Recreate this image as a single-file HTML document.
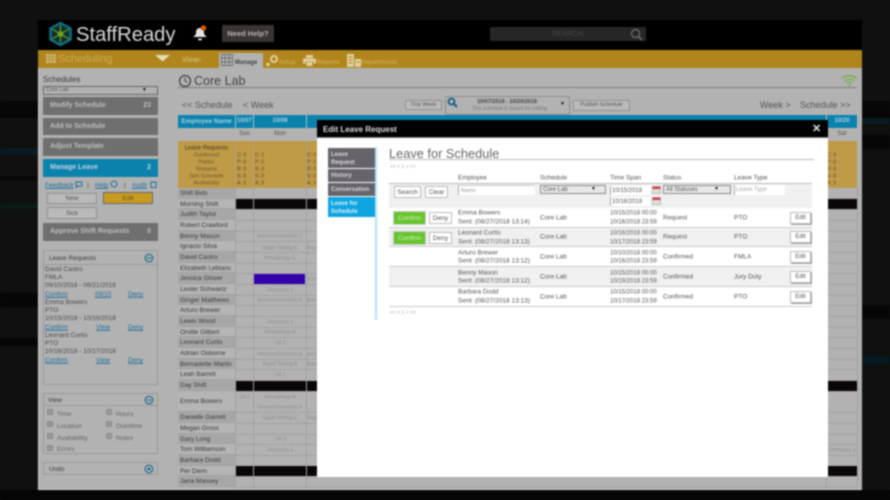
<!DOCTYPE html>
<html><head><meta charset="utf-8"><title>StaffReady</title>
<style>
html,body{margin:0;padding:0;background:#101010;}
#wrap{position:relative;width:890px;height:500px;overflow:hidden;background:#101010;}
#p{position:absolute;left:0;top:0;width:890px;height:500px;overflow:hidden;filter:blur(.7px);font-family:"Liberation Sans",sans-serif;color:#333;}
#p div,#p span,#p svg{position:absolute;white-space:nowrap;}
.b{background:#6f6f6f;color:#bdbdbd;font-weight:bold;font-size:7px;left:43px;width:115px;height:18px;line-height:18px;text-indent:7px;}
.b i{position:absolute;right:7px;top:0;font-style:normal;text-indent:0;}
.wb{background:#bababa;border:1px solid #909090;font-size:6.5px;text-align:center;color:#555;box-sizing:border-box;}
.t{font-size:6.5px;color:#4a4a4a;left:45px;transform:translateY(.8px);}
.l{font-size:6.5px;color:#1f6f9f;text-decoration:underline;transform:translateY(.8px);}
.n{left:178px;width:57px;height:10.67px;line-height:12.5px;font-size:6.5px;color:#3a3a3a;text-indent:2px;background:#b5b5b5;border-bottom:1px solid #a2a2a2;box-sizing:border-box;}
.n.a{background:#a7a7a7;}
.c{left:254px;width:52px;text-align:center;font-size:5px;color:#909090;overflow:hidden;transform:translateY(1.5px);}
.rl{left:178px;width:57px;text-align:center;font-size:5.5px;color:#6b5a26;transform:translateY(1.5px);}
.yt{font-size:5px;color:#5a4c25;transform:translateY(1.5px);}
.bl{height:10px;background:#0a0506;}
.v{width:1px;background:#a0a0a0;top:188px;height:299px;}
.h{height:1px;background:#a2a2a2;}
.m{font-size:6.5px;color:#555;transform:translateY(.7px);}
.ed{left:790px;width:21px;height:12px;background:#fff;border:1px solid #bbb;box-shadow:1px 1px 0 #999;box-sizing:border-box;font-size:6px;line-height:11px;text-align:center;color:#555;}
.gr{left:394px;width:31px;height:12px;background:#66c42c;color:#d7f0c0;font-size:6.5px;line-height:13px;text-align:center;box-shadow:0 0 0 1px #ccc;}
.dn{left:429px;width:23px;height:12px;background:#fff;border:1px solid #bbb;box-sizing:border-box;color:#555;font-size:6.5px;line-height:11px;text-align:center;}
.nv{left:328px;width:47px;background:#66636a;color:#d8d8d8;font-weight:bold;font-size:6px;line-height:8px;padding:0 0 0 3px;box-sizing:border-box;}
.ck{width:6px;height:6px;background:#9a9a9a;border:1px solid #8a8a8a;box-sizing:border-box;border-radius:1px;}
.ct{font-size:6.5px;color:#666;transform:translateY(.8px);}
.tb{font-size:6px;color:#c9a84f;font-weight:bold;}
</style></head>
<body><div id="wrap"><div id="p">

<!-- dim background bands -->
<div style="left:0;top:101px;width:38px;height:17px;background:#070707"></div>
<div style="left:0;top:148px;width:38px;height:7px;background:#0a1a20"></div>
<div style="left:0;top:176px;width:38px;height:5px;background:#080808"></div>
<div style="left:0;top:203px;width:38px;height:6px;background:#0a1a16"></div>
<div style="left:0;top:293px;width:38px;height:14px;background:#060606"></div>
<div style="left:0;top:338px;width:38px;height:8px;background:#060606"></div>
<div style="left:862px;top:101px;width:28px;height:17px;background:#070707"></div>
<div style="left:862px;top:118px;width:28px;height:6px;background:#0a1a20"></div>
<div style="left:862px;top:135px;width:28px;height:14px;background:#060606"></div>
<div style="left:862px;top:305px;width:28px;height:14px;background:#060606"></div>
<div style="left:862px;top:355px;width:28px;height:10px;background:#08181e"></div>
<div style="left:0;top:490px;width:890px;height:10px;background:#050505"></div>

<!-- header -->
<div style="left:38px;top:20px;width:824px;height:30px;background:#000"></div>
<svg style="left:48px;top:21px" width="25" height="26" viewBox="0 0 25 26"><polygon points="12.5,2 22.5,7.5 22.5,18.5 12.5,24 2.5,18.5 2.5,7.5" fill="#0a3030" stroke="#0f6f86" stroke-width="2.4"/><g stroke="#5f8a1c" stroke-width="1.5"><line x1="12.5" y1="4" x2="12.5" y2="22"/><line x1="4" y1="8" x2="21" y2="18"/><line x1="21" y1="8" x2="4" y2="18"/></g><circle cx="12.5" cy="13" r="3" fill="#6f9e1c"/></svg>
<div style="left:76px;top:21px;font-size:20.2px;line-height:28px;color:#d8d8d8">StaffReady</div>
<svg style="left:192px;top:25px" width="16" height="16" viewBox="0 0 16 16"><path d="M8 3c-3 0-4 2-4 4.500 0 2-1 3-3 4.500h14c-2-1.500-3-2.500-3-4.500C12 5 11 3 8 3z" fill="#e2e2e2"/><path d="M6 13.500a2 2 0 0 0 4 0z" fill="#e2e2e2"/><circle cx="11.500" cy="3" r="2.800" fill="#d2560f"/></svg>
<div style="left:222px;top:25px;width:52px;height:17px;background:#3a3434;border-radius:1px;color:#b8b8b8;font-size:7.5px;font-weight:bold;line-height:17px;text-align:center">Need Help?</div>
<div style="left:490px;top:27px;width:156px;height:14px;background:#262626;border-radius:1px;"></div>
<div style="left:552px;top:29px;font-size:7.5px;line-height:10px;color:#484848">SEARCH</div>
<svg style="left:630px;top:28px" width="13" height="13" viewBox="0 0 13 13"><circle cx="5.500" cy="5.500" r="4" fill="none" stroke="#6a6a6a" stroke-width="1.400"/><line x1="8.500" y1="8.500" x2="12" y2="12" stroke="#6a6a6a" stroke-width="1.800"/></svg>

<!-- yellow bar -->
<div style="left:38px;top:50px;width:824px;height:18px;background:#b0851c"></div>
<svg style="left:46px;top:54px" width="10" height="9" viewBox="0 0 10 9"><path d="M0 0h10v9H0z" fill="#d0b679"/><path d="M3.300 0v9M6.600 0v9M0 3h10M0 6h10" stroke="#b0851c" stroke-width=".7"/></svg>
<div style="left:58px;top:52px;font-size:11px;line-height:14px;color:#c9aa5c">Scheduling</div>
<svg style="left:155px;top:55px" width="16" height="7"><polygon points="0,0 15,0 7.500,6.500" fill="#e6d9b5"/></svg>
<div style="left:182px;top:55px;font-size:7.5px;line-height:10px;font-weight:bold;color:#d0b679">View:</div>
<div style="left:219px;top:53px;width:44px;height:15px;background:#b2b2b2"></div>
<svg style="left:221px;top:54px" width="12" height="12" viewBox="0 0 12 12"><path d="M.5.500h11v11H.500zM4 .5v11M8 .5v11M.5 4h11M.5 8h11" fill="none" stroke="#5c5c5c" stroke-width=".7"/></svg>
<div style="left:235px;top:59px;font-size:6px;line-height:8px;font-weight:bold;color:#444">Manage</div>
<svg style="left:265px;top:54px" width="14" height="13" viewBox="0 0 14 13"><circle cx="9" cy="5" r="3" fill="none" stroke="#e0cf9e" stroke-width="2"/><circle cx="3" cy="10.500" r="1.800" fill="#e0cf9e"/></svg>
<div class="tb" style="left:279px;top:59px;line-height:8px">Setup</div>
<svg style="left:303px;top:55px" width="13" height="11" viewBox="0 0 13 11"><path d="M3 0h7v3H3zM0 3.500h13v5h-2.500V6.500h-8v2H0zM3.500 7h6v4h-6z" fill="#e0cf9e"/></svg>
<div class="tb" style="left:317px;top:59px;line-height:8px">Reports</div>
<svg style="left:347px;top:54px" width="14" height="13" viewBox="0 0 14 13"><path d="M0 0h7v13H0zM8 5h6v8H8z" fill="#e0cf9e"/><path d="M1.500 3h4M1.500 6h4M1.500 9h4M9.500 8h3" stroke="#b0851c"/></svg>
<div class="tb" style="left:361px;top:59px;line-height:8px">Departments</div>

<!-- main panel -->
<div style="left:38px;top:68px;width:824px;height:422px;background:#b2b2b2;border-left:1px solid #cfcfcf;border-bottom:1px solid #cfcfcf;box-sizing:border-box"></div>

<!-- sidebar -->
<div style="left:43px;top:75px;font-size:8px;line-height:10px;color:#3c3c3c">Schedules</div>
<div style="left:43px;top:86px;width:115px;height:9px;border:1px solid #666;box-sizing:border-box;font-size:5.5px;line-height:7px;text-indent:2px;color:#555">Core Lab<span style="right:10px;top:0;font-size:5px;text-indent:0;color:#111">▼</span></div>
<div class="b" style="top:97px">Modify Schedule<i>23</i></div>
<div class="b" style="top:118px;height:17px;line-height:17px">Add to Schedule</div>
<div class="b" style="top:138px;height:18px">Adjust Template</div>
<div class="b" style="top:159px;background:#0b82ad;color:#c0d3dd">Manage Leave<i>2</i></div>
<div class="l" style="left:45px;top:181px;line-height:8px">Feedback</div>
<svg style="left:75px;top:181px" width="8" height="7"><path d="M1 1h6v4H3L1.500 6.500V5H1z" fill="none" stroke="#1f6f9f"/></svg>
<div class="t" style="left:87px;top:181px;line-height:8px">|</div>
<div class="l" style="left:95px;top:181px;line-height:8px">Help</div>
<svg style="left:110px;top:180px" width="8" height="8"><circle cx="4" cy="4" r="3" fill="none" stroke="#1f6f9f"/></svg>
<div class="t" style="left:124px;top:181px;line-height:8px">|</div>
<div class="l" style="left:132px;top:181px;line-height:8px">Audit</div>
<svg style="left:150px;top:181px" width="7" height="7"><rect x="1" y="1" width="5" height="5.500" fill="none" stroke="#1f6f9f"/></svg>
<div class="wb" style="left:47px;top:193px;width:50px;height:11px;line-height:10px">New</div>
<div class="wb" style="left:103px;top:192px;width:50px;height:12px;line-height:11px;background:#c79a20;border-color:#666;color:#6b5310">Edit</div>
<div class="wb" style="left:47px;top:207px;width:50px;height:12px;line-height:11px">Sick</div>
<div class="b" style="top:223px;height:18px">Approve Shift Requests<i>0</i></div>

<div style="left:43px;top:250px;width:115px;height:135px;border:1px solid #999;box-sizing:border-box"></div>
<div style="left:44px;top:264px;width:113px;height:1px;background:#999"></div>
<div class="t" style="left:49px;top:253px;line-height:9px;color:#3a3a3a">Leave Requests</div>
<svg style="left:144px;top:253px" width="10" height="10"><circle cx="5" cy="5" r="3.800" fill="none" stroke="#1d6f8a" stroke-width="1.200"/><line x1="2.800" y1="5" x2="7.200" y2="5" stroke="#1d6f8a" stroke-width="1.200"/></svg>
<div class="t" style="top:265px;line-height:8px">David Castro</div>
<div class="t" style="top:273px;line-height:8px">FMLA</div>
<div class="t" style="top:281px;line-height:8px">09/10/2018 - 09/21/2018</div>
<div class="l" style="left:45px;top:290px;line-height:8px">Confirm</div><div class="l" style="left:95px;top:290px;line-height:8px">09/10</div><div class="l" style="left:128px;top:290px;line-height:8px">Deny</div>
<div class="t" style="top:298px;line-height:8px">Emma Bowers</div>
<div class="t" style="top:306px;line-height:8px">PTO</div>
<div class="t" style="top:314px;line-height:8px">10/15/2018 - 10/16/2018</div>
<div class="l" style="left:45px;top:323px;line-height:8px">Confirm</div><div class="l" style="left:96px;top:323px;line-height:8px">View</div><div class="l" style="left:128px;top:323px;line-height:8px">Deny</div>
<div class="t" style="top:331px;line-height:8px">Leonard Curtis</div>
<div class="t" style="top:339px;line-height:8px">PTO</div>
<div class="t" style="top:347px;line-height:8px">10/16/2018 - 10/17/2018</div>
<div class="l" style="left:45px;top:356px;line-height:8px">Confirm</div><div class="l" style="left:96px;top:356px;line-height:8px">View</div><div class="l" style="left:128px;top:356px;line-height:8px">Deny</div>

<div style="left:43px;top:393px;width:115px;height:61px;border:1px solid #999;box-sizing:border-box"></div>
<div style="left:44px;top:405px;width:113px;height:1px;background:#999"></div>
<div class="t" style="left:48px;top:395px;line-height:9px;color:#3a3a3a">View</div>
<svg style="left:144px;top:395px" width="10" height="10"><circle cx="5" cy="5" r="3.800" fill="none" stroke="#1d6f8a" stroke-width="1.200"/><line x1="2.800" y1="5" x2="7.200" y2="5" stroke="#1d6f8a" stroke-width="1.200"/></svg>
<div class="ck" style="left:47px;top:409px"></div><div class="ct" style="left:57px;top:409px;line-height:9px">Time</div>
<div class="ck" style="left:106px;top:409px"></div><div class="ct" style="left:116px;top:409px;line-height:9px">Hours</div>
<div class="ck" style="left:47px;top:421px"></div><div class="ct" style="left:57px;top:421px;line-height:9px">Location</div>
<div class="ck" style="left:106px;top:421px"></div><div class="ct" style="left:116px;top:421px;line-height:9px">Overtime</div>
<div class="ck" style="left:47px;top:433px"></div><div class="ct" style="left:57px;top:433px;line-height:9px">Availability</div>
<div class="ck" style="left:106px;top:433px"></div><div class="ct" style="left:116px;top:433px;line-height:9px">Notes</div>
<div class="ck" style="left:47px;top:445px"></div><div class="ct" style="left:57px;top:444px;line-height:9px">Errors</div>

<div style="left:43px;top:462px;width:115px;height:13px;border:1px solid #999;box-sizing:border-box"></div>
<div class="t" style="left:49px;top:464px;line-height:9px;color:#3a3a3a">Undo</div>
<svg style="left:144px;top:464px" width="10" height="10"><circle cx="5" cy="5" r="3.800" fill="none" stroke="#1d6f8a" stroke-width="1.200"/><circle cx="5" cy="5" r="1.500" fill="#1d6f8a"/></svg>

<!-- title -->
<svg style="left:178px;top:74px" width="14" height="14" viewBox="0 0 14 14"><circle cx="7" cy="7" r="5.500" fill="none" stroke="#444" stroke-width="1.300"/><path d="M7 3.500V7l2.500 1.500" fill="none" stroke="#444"/></svg>
<div style="left:194px;top:73px;font-size:12.5px;line-height:16px;color:#444">Core Lab</div>
<div style="left:178px;top:87px;width:679px;height:1px;background:#7d7d7d"></div>
<svg style="left:841px;top:74px" width="17" height="13" viewBox="0 0 17 13"><g fill="none" stroke="#6fae3a" stroke-width="1.200"><path d="M1 4.500C5 1 12 1 16 4.500"/><path d="M3.500 7C6 4.800 11 4.800 13.500 7"/><path d="M6 9.300C7.500 8.200 9.500 8.200 11 9.300"/></g><circle cx="8.500" cy="11.500" r="1" fill="#6fae3a"/></svg>

<!-- nav -->
<div style="left:182px;top:99px;font-size:9px;line-height:12px;color:#555">&lt;&lt; Schedule</div>
<div style="left:243px;top:99px;font-size:9px;line-height:12px;color:#555">&lt; Week</div>
<div class="wb" style="left:405px;top:100px;width:37px;height:10px;font-size:5.5px;line-height:8px">This Week</div>
<div style="left:445px;top:96px;width:125px;height:19px;border:1px solid #8e8e8e;border-radius:2px;box-sizing:border-box"></div>
<svg style="left:447px;top:97px" width="11" height="11"><circle cx="4.500" cy="4.500" r="3" fill="none" stroke="#0f5f86" stroke-width="1.800"/><line x1="6.500" y1="6.500" x2="10" y2="10" stroke="#0f5f86" stroke-width="2"/></svg>
<div style="left:477px;top:98px;font-size:5.5px;line-height:8px;font-weight:bold;color:#444">10/07/2018 - 10/20/2018</div>
<div style="left:472px;top:105px;font-size:5px;line-height:8px;color:#777">This schedule is locked for editing</div>
<div style="left:560px;top:100px;font-size:5px;line-height:8px;color:#111">▼</div>
<div class="wb" style="left:573px;top:100px;width:57px;height:11px;font-size:5.500px;line-height:9px">Publish Schedule</div>
<div style="left:760px;top:99px;font-size:9px;line-height:12px;color:#555">Week &gt;</div>
<div style="left:800px;top:99px;font-size:9px;line-height:12px;color:#555">Schedule &gt;&gt;</div>

<!-- grid header -->
<div style="left:178px;top:115px;width:679px;height:13px;background:#0b82ad"></div>
<div style="left:235px;top:115px;width:1px;height:13px;background:#9cc4d4"></div>
<div style="left:253px;top:115px;width:1px;height:13px;background:#9cc4d4"></div>
<div style="left:306px;top:115px;width:1px;height:13px;background:#9cc4d4"></div>
<div style="left:826px;top:115px;width:1px;height:13px;background:#9cc4d4"></div>
<div style="left:178px;top:115px;width:57px;text-align:center;line-height:13px;font-size:6.500px;font-weight:bold;color:#a9d0e0">Employee Name</div>
<div style="left:235px;top:115px;width:19px;text-align:center;line-height:13px;font-size:6px;font-weight:bold;color:#a9d0e0">10/07</div>
<div style="left:254px;top:115px;width:52px;text-align:center;line-height:13px;font-size:6px;font-weight:bold;color:#a9d0e0">10/08</div>
<div style="left:827px;top:115px;width:30px;text-align:center;line-height:13px;font-size:6px;font-weight:bold;color:#a9d0e0">10/20</div>
<div style="left:235px;top:129px;width:19px;text-align:center;line-height:10px;font-size:6px;color:#555">Sun</div>
<div style="left:254px;top:129px;width:52px;text-align:center;line-height:10px;font-size:6px;color:#555">Mon</div>
<div style="left:827px;top:129px;width:30px;text-align:center;line-height:10px;font-size:6px;color:#555">Sat</div>

<!-- yellow leave section -->
<div style="left:178px;top:141px;width:679px;height:47px;background:#bf9a47"></div>
<div style="left:235px;top:141px;width:1px;height:47px;background:#b0a080"></div>
<div style="left:253px;top:141px;width:1px;height:47px;background:#b0a080"></div>
<div style="left:306px;top:141px;width:1px;height:47px;background:#b0a080"></div>
<div class="rl" style="top:143px;line-height:8px;font-size:6px;color:#443a1a">Leave Requests</div>
<div class="rl" style="top:151px;line-height:7px">Confirmed</div>
<div class="rl" style="top:158px;line-height:7px">Partial</div>
<div class="rl" style="top:165px;line-height:7px">Request</div>
<div class="rl" style="top:172px;line-height:7px">See Schedule</div>
<div class="rl" style="top:179px;line-height:7px">Availability</div>
<div class="yt" style="left:237px;top:151px;line-height:7px">C: 0</div><div class="yt" style="left:237px;top:158px;line-height:7px">P: 0</div><div class="yt" style="left:237px;top:165px;line-height:7px">R: 0</div><div class="yt" style="left:237px;top:172px;line-height:7px">S: 0</div><div class="yt" style="left:237px;top:179px;line-height:7px">A: 3</div>
<div class="yt" style="left:255px;top:151px;line-height:7px">C: 1</div><div class="yt" style="left:255px;top:158px;line-height:7px">P: 0</div><div class="yt" style="left:255px;top:165px;line-height:7px">R: 0</div><div class="yt" style="left:255px;top:172px;line-height:7px">S: 0</div><div class="yt" style="left:255px;top:179px;line-height:7px">A: 3</div>
<div class="yt" style="left:307px;top:151px;line-height:7px">C: 0</div><div class="yt" style="left:307px;top:158px;line-height:7px">P: 0</div><div class="yt" style="left:307px;top:165px;line-height:7px">R: 0</div><div class="yt" style="left:307px;top:172px;line-height:7px">S: 0</div><div class="yt" style="left:307px;top:179px;line-height:7px">A: 3</div>
<div class="yt" style="left:827px;top:151px;line-height:7px">C: 0</div><div class="yt" style="left:827px;top:158px;line-height:7px">P: 0</div><div class="yt" style="left:827px;top:165px;line-height:7px">R: 0</div><div class="yt" style="left:827px;top:172px;line-height:7px">S: 0</div><div class="yt" style="left:827px;top:179px;line-height:7px">A: 3</div>

<!-- row lines -->
<div class="h" style="left:235px;top:198px;width:622px"></div><div class="h" style="left:235px;top:209px;width:622px"></div><div class="h" style="left:235px;top:220px;width:622px"></div><div class="h" style="left:235px;top:231px;width:622px"></div><div class="h" style="left:235px;top:241px;width:622px"></div><div class="h" style="left:235px;top:252px;width:622px"></div><div class="h" style="left:235px;top:263px;width:622px"></div><div class="h" style="left:235px;top:273px;width:622px"></div><div class="h" style="left:235px;top:284px;width:622px"></div><div class="h" style="left:235px;top:295px;width:622px"></div><div class="h" style="left:235px;top:305px;width:622px"></div><div class="h" style="left:235px;top:316px;width:622px"></div><div class="h" style="left:235px;top:327px;width:622px"></div><div class="h" style="left:235px;top:337px;width:622px"></div><div class="h" style="left:235px;top:348px;width:622px"></div><div class="h" style="left:235px;top:359px;width:622px"></div><div class="h" style="left:235px;top:369px;width:622px"></div><div class="h" style="left:235px;top:380px;width:622px"></div><div class="h" style="left:235px;top:391px;width:622px"></div><div class="h" style="left:235px;top:412px;width:622px"></div><div class="h" style="left:235px;top:423px;width:622px"></div><div class="h" style="left:235px;top:434px;width:622px"></div><div class="h" style="left:235px;top:444px;width:622px"></div><div class="h" style="left:235px;top:455px;width:622px"></div><div class="h" style="left:235px;top:466px;width:622px"></div><div class="h" style="left:235px;top:476px;width:622px"></div><div class="h" style="left:235px;top:487px;width:622px"></div>

<!-- names -->
<div class="n a" style="top:188px">Shift Bids</div>
<div class="n" style="top:198.700px">Morning Shift</div>
<div class="n a" style="top:209.300px">Judith Taylor</div>
<div class="n" style="top:220px">Robert Crawford</div>
<div class="n a" style="top:230.700px">Benny Mason</div>
<div class="n" style="top:241.300px">Ignacio Silva</div>
<div class="n a" style="top:252px">David Castro</div>
<div class="n" style="top:262.700px">Elizabeth Leblanc</div>
<div class="n a" style="top:273.300px">Jessica Glover</div>
<div class="n" style="top:284px">Lester Schwartz</div>
<div class="n a" style="top:294.700px">Ginger Matthews</div>
<div class="n" style="top:305.300px">Arturo Brewer</div>
<div class="n a" style="top:316px">Lewis Wood</div>
<div class="n" style="top:326.700px">Orville Gilbert</div>
<div class="n a" style="top:337.300px">Leonard Curtis</div>
<div class="n" style="top:348px">Adrian Osborne</div>
<div class="n a" style="top:358.700px">Bernadette Martin</div>
<div class="n" style="top:369.300px">Leah Barrett</div>
<div class="n a" style="top:380px">Day Shift</div>
<div class="n" style="top:391px;height:21px;line-height:22px">Emma Bowers</div>
<div class="n a" style="top:412px">Danielle Garrett</div>
<div class="n" style="top:423px">Megan Gross</div>
<div class="n a" style="top:433.700px">Gary Long</div>
<div class="n" style="top:444.300px">Tom Williamson</div>
<div class="n a" style="top:455px">Barbara Dodd</div>
<div class="n" style="top:465.700px">Per Diem</div>
<div class="n a" style="top:476.300px">Jana Massey</div>

<!-- black bars -->
<div class="bl" style="left:236px;top:199px;width:621px"></div>
<div class="bl" style="left:236px;top:381px;width:621px"></div>
<div class="bl" style="left:236px;top:466px;width:621px"></div>
<div class="v" style="left:235px"></div><div class="v" style="left:253px"></div><div class="v" style="left:306px"></div><div class="v" style="left:826px"></div><div class="v" style="left:857px"></div>
<div style="left:254px;top:274px;width:51px;height:10px;background:#3300aa"></div>

<!-- cell text -->
<div class="c" style="top:231px;line-height:9px">Immunochemistry C</div>
<div class="c" style="top:243px;line-height:9px">Rapid Testing A</div>
<div class="c" style="top:253px;line-height:9px">Hematology C</div>
<div class="c" style="top:285px;line-height:9px">Chemistry 2</div>
<div class="c" style="top:295px;line-height:9px">Immunochemistry B</div>
<div class="c" style="top:317px;line-height:9px">Chemistry 1</div>
<div class="c" style="top:327px;line-height:9px">Hematology A</div>
<div class="c" style="top:338px;line-height:9px">UA 2</div>
<div class="c" style="top:349px;line-height:9px">Immunochemistry A</div>
<div class="c" style="top:359px;line-height:9px">Rapid Testing B</div>
<div class="c" style="top:370px;line-height:9px">UA 1</div>
<div class="c" style="top:392px;line-height:9px">Hematology B</div>
<div class="c" style="top:402px;line-height:9px">Immunochemistry A</div>
<div class="c" style="top:413px;line-height:9px">Rapid Testing C</div>
<div class="c" style="top:434px;line-height:9px">UA 3</div>
<div class="c" style="top:445px;line-height:9px">Chemistry 3</div>
<div class="c" style="left:236px;width:17px;top:392px;line-height:9px">UA 3</div>
<div class="c" style="left:307px;width:12px;text-align:left;top:243px;line-height:9px">Rapid</div>
<div class="c" style="left:307px;width:12px;text-align:left;top:274px;line-height:9px">Immuno</div>
<div class="c" style="left:307px;width:12px;text-align:left;top:295px;line-height:9px">Immuno</div>
<div class="c" style="left:307px;width:12px;text-align:left;top:349px;line-height:9px">Immuno</div>
<div class="c" style="left:307px;width:12px;text-align:left;top:359px;line-height:9px">Rapid</div>
<div class="c" style="left:307px;width:12px;text-align:left;top:413px;line-height:9px">Rapid</div>
<div class="c" style="left:827px;width:30px;top:445px;line-height:9px">Chemistry 3</div>

<!-- modal -->
<div style="left:317px;top:120px;width:511px;height:17px;background:#000;border-bottom:1px solid #777"></div>
<div style="left:317px;top:138px;width:511px;height:339px;background:#fff"></div>
<div style="left:323px;top:124px;font-size:8px;line-height:11px;font-weight:bold;color:#dcdcdc">Edit Leave Request</div>
<div style="left:812px;top:123px;font-size:11px;line-height:13px;font-weight:bold;color:#e8e8e8">✕</div>

<div style="left:375px;top:147px;width:2px;height:173px;background:#aee2f7"></div>
<div class="nv" style="top:148px;height:20px;padding-top:3px">Leave<br>Request</div>
<div class="nv" style="top:169px;height:13px;line-height:15px">History</div>
<div class="nv" style="top:183px;height:13px;line-height:14px">Conversation</div>
<div class="nv" style="top:197px;height:20px;padding-top:3px;background:#0ea5e0;color:#d8f0fb">Leave for<br>Schedule</div>

<div style="left:389px;top:146px;font-size:12.8px;line-height:16px;color:#666">Leave for Schedule</div>
<div style="left:389px;top:159px;width:425px;height:1px;background:#bbb"></div>
<div style="left:390px;top:164px;font-size:5px;line-height:7px;color:#aaa">&lt;&lt; &lt; 1 &gt; &gt;&gt;</div>

<div class="m" style="left:458px;top:173px;line-height:9px">Employee</div>
<div class="m" style="left:540px;top:173px;line-height:9px">Schedule</div>
<div class="m" style="left:610px;top:173px;line-height:9px">Time Span</div>
<div class="m" style="left:663px;top:173px;line-height:9px">Status</div>
<div class="m" style="left:734px;top:173px;line-height:9px">Leave Type</div>

<div style="left:389px;top:183px;width:423px;height:25px;background:#f0f0f0;border-top:1px solid #bbb;box-sizing:border-box"></div>
<div style="left:394px;top:186px;width:27px;height:12px;background:#fff;border:1px solid #bbb;box-sizing:border-box;font-size:6.500px;line-height:11px;text-align:center;color:#555">Search</div>
<div style="left:425px;top:186px;width:23px;height:12px;background:#fff;border:1px solid #bbb;box-sizing:border-box;font-size:6.500px;line-height:11px;text-align:center;color:#555">Clear</div>
<div style="left:458px;top:185px;width:77px;height:10px;background:#fff;border-left:1px solid #aaa;border-top:1px solid #ccc;box-sizing:border-box;font-size:5.500px;line-height:10px;text-indent:2px;color:#999">Name</div>
<div style="left:540px;top:185px;width:66px;height:9px;background:#e8e8e8;border:1px solid #888;box-sizing:border-box;font-size:6px;line-height:9px;text-indent:2px;color:#555">Core Lab<span style="right:9px;top:0;font-size:5px;line-height:7px;text-indent:0;color:#111">▼</span></div>
<div style="left:610px;top:186px;width:40px;height:9px;background:#fff;border-left:1px solid #aaa;box-sizing:border-box;font-size:6px;line-height:10px;text-indent:1px;color:#555">10/15/2018</div>
<div style="left:610px;top:197px;width:40px;height:9px;background:#fff;border-left:1px solid #aaa;box-sizing:border-box;font-size:6px;line-height:10px;text-indent:1px;color:#555">10/16/2018</div>
<svg style="left:652px;top:186px" width="9" height="8"><rect x=".5" y=".5" width="8" height="7" fill="#ddd" stroke="#999" stroke-width=".5"/><rect x=".5" y=".5" width="8" height="2.500" fill="#c44"/></svg>
<svg style="left:652px;top:197px" width="9" height="8"><rect x=".5" y=".5" width="8" height="7" fill="#ddd" stroke="#999" stroke-width=".5"/><rect x=".5" y=".5" width="8" height="2.500" fill="#c44"/></svg>
<div style="left:663px;top:185px;width:68px;height:9px;background:#e8e8e8;border:1px solid #888;box-sizing:border-box;font-size:6px;line-height:9px;text-indent:2px;color:#555">All Statuses<span style="right:11px;top:0;font-size:5px;line-height:7px;text-indent:0;color:#111">▼</span></div>
<div style="left:734px;top:185px;width:51px;height:10px;background:#fff;border-left:1px solid #aaa;box-sizing:border-box;font-size:6px;line-height:11px;text-indent:1px;color:#aaa">Leave Type</div>

<div style="left:389px;top:227px;width:423px;height:20px;background:#f0f0f0;border-top:1px solid #ccc;border-bottom:1px solid #ccc;box-sizing:border-box"></div>
<div style="left:389px;top:266px;width:423px;height:21px;background:#f0f0f0;border-top:1px solid #ccc;border-bottom:1px solid #ccc;box-sizing:border-box"></div>
<div style="left:389px;top:306px;width:423px;height:1px;background:#ccc"></div>

<!-- r1 -->
<div class="gr" style="top:212px">Confirm</div><div class="dn" style="top:212px">Deny</div>
<div class="m" style="left:458px;top:209px;line-height:8px">Emma Bowers</div>
<div class="m" style="left:458px;top:218px;line-height:8px">Sent: (08/27/2018 13:14)</div>
<div class="m" style="left:540px;top:214px;line-height:8px">Core Lab</div>
<div class="m" style="left:610px;top:209px;line-height:8px;font-size:6px">10/15/2018 00:00</div>
<div class="m" style="left:610px;top:218px;line-height:8px;font-size:6px">10/16/2018 23:59</div>
<div class="m" style="left:663px;top:214px;line-height:8px">Request</div>
<div class="m" style="left:734px;top:214px;line-height:8px">PTO</div>
<div class="ed" style="top:212px">Edit</div>
<!-- r2 -->
<div class="gr" style="top:232px">Confirm</div><div class="dn" style="top:232px">Deny</div>
<div class="m" style="left:458px;top:229px;line-height:8px">Leonard Curtis</div>
<div class="m" style="left:458px;top:238px;line-height:8px">Sent: (08/27/2018 13:13)</div>
<div class="m" style="left:540px;top:233px;line-height:8px">Core Lab</div>
<div class="m" style="left:610px;top:229px;line-height:8px;font-size:6px">10/16/2018 00:00</div>
<div class="m" style="left:610px;top:238px;line-height:8px;font-size:6px">10/17/2018 23:59</div>
<div class="m" style="left:663px;top:233px;line-height:8px">Request</div>
<div class="m" style="left:734px;top:233px;line-height:8px">PTO</div>
<div class="ed" style="top:231px">Edit</div>
<!-- r3 -->
<div class="m" style="left:458px;top:249px;line-height:8px">Arturo Brewer</div>
<div class="m" style="left:458px;top:257px;line-height:8px">Sent: (08/27/2018 13:12)</div>
<div class="m" style="left:540px;top:253px;line-height:8px">Core Lab</div>
<div class="m" style="left:610px;top:249px;line-height:8px;font-size:6px">10/10/2018 00:00</div>
<div class="m" style="left:610px;top:257px;line-height:8px;font-size:6px">10/16/2018 23:59</div>
<div class="m" style="left:663px;top:253px;line-height:8px">Confirmed</div>
<div class="m" style="left:734px;top:253px;line-height:8px">FMLA</div>
<div class="ed" style="top:251px">Edit</div>
<!-- r4 -->
<div class="m" style="left:458px;top:269px;line-height:8px">Benny Mason</div>
<div class="m" style="left:458px;top:277px;line-height:8px">Sent: (08/27/2018 13:12)</div>
<div class="m" style="left:540px;top:273px;line-height:8px">Core Lab</div>
<div class="m" style="left:610px;top:269px;line-height:8px;font-size:6px">10/15/2018 00:00</div>
<div class="m" style="left:610px;top:277px;line-height:8px;font-size:6px">10/19/2018 23:59</div>
<div class="m" style="left:663px;top:273px;line-height:8px">Confirmed</div>
<div class="m" style="left:734px;top:273px;line-height:8px">Jury Duty</div>
<div class="ed" style="top:271px">Edit</div>
<!-- r5 -->
<div class="m" style="left:458px;top:288px;line-height:8px">Barbara Dodd</div>
<div class="m" style="left:458px;top:297px;line-height:8px">Sent: (08/27/2018 13:13)</div>
<div class="m" style="left:540px;top:293px;line-height:8px">Core Lab</div>
<div class="m" style="left:610px;top:288px;line-height:8px;font-size:6px">10/15/2018 00:00</div>
<div class="m" style="left:610px;top:297px;line-height:8px;font-size:6px">10/17/2018 23:59</div>
<div class="m" style="left:663px;top:293px;line-height:8px">Confirmed</div>
<div class="m" style="left:734px;top:293px;line-height:8px">PTO</div>
<div class="ed" style="top:291px">Edit</div>

<div style="left:390px;top:310px;font-size:5px;line-height:7px;color:#aaa">&lt;&lt; &lt; 1 &gt; &gt;&gt;</div>

</div></div></body></html>
